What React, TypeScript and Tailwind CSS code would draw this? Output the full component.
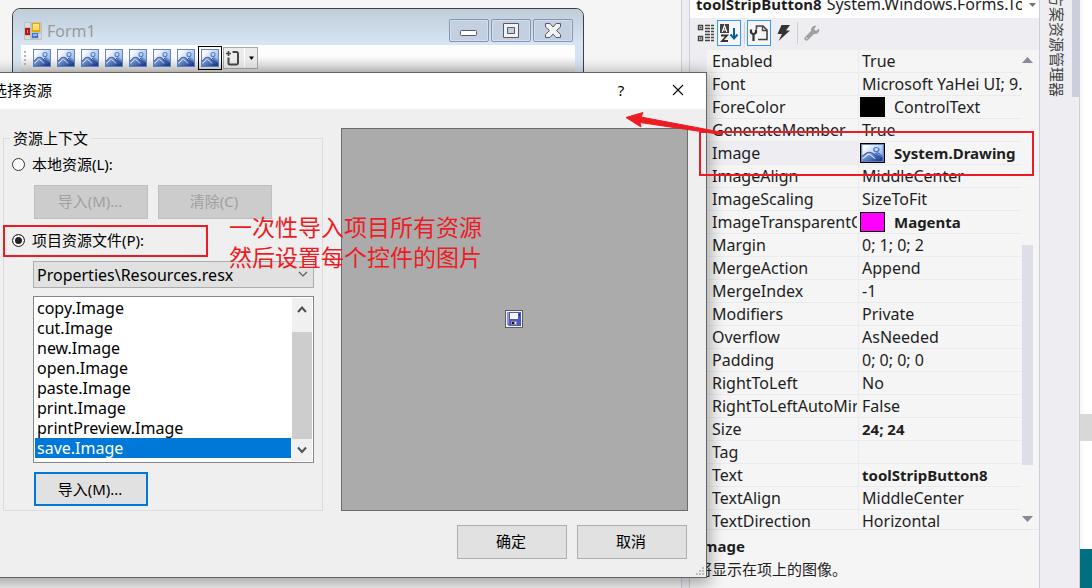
import React from 'react';

interface Property {
  name: string;
  value: string;
  bold?: boolean;
  swatch?: 'black' | 'magenta' | 'picture';
}

const PROPERTIES: Property[] = [
  { name: 'Enabled', value: 'True' },
  { name: 'Font', value: 'Microsoft YaHei UI; 9.' },
  { name: 'ForeColor', value: 'ControlText', swatch: 'black' },
  { name: 'GenerateMember', value: 'True' },
  { name: 'Image', value: 'System.Drawing', bold: true, swatch: 'picture' },
  { name: 'ImageAlign', value: 'MiddleCenter' },
  { name: 'ImageScaling', value: 'SizeToFit' },
  { name: 'ImageTransparentColor', value: 'Magenta', bold: true, swatch: 'magenta' },
  { name: 'Margin', value: '0; 1; 0; 2' },
  { name: 'MergeAction', value: 'Append' },
  { name: 'MergeIndex', value: '-1' },
  { name: 'Modifiers', value: 'Private' },
  { name: 'Overflow', value: 'AsNeeded' },
  { name: 'Padding', value: '0; 0; 0; 0' },
  { name: 'RightToLeft', value: 'No' },
  { name: 'RightToLeftAutoMirrorImage', value: 'False' },
  { name: 'Size', value: '24; 24', bold: true },
  { name: 'Tag', value: '' },
  { name: 'Text', value: 'toolStripButton8', bold: true },
  { name: 'TextAlign', value: 'MiddleCenter' },
  { name: 'TextDirection', value: 'Horizontal' },
];

const RESOURCES = [
  'copy.Image',
  'cut.Image',
  'new.Image',
  'open.Image',
  'paste.Image',
  'print.Image',
  'printPreview.Image',
  'save.Image',
];

const STRIP_BUTTONS = [1, 2, 3, 4, 5, 6, 7, 8];

/* Default tool strip image: mountains and a sun */
const PictureIcon: React.FC<{ className?: string }> = ({ className }) => (
  <svg className={className} viewBox="0 0 18 18" preserveAspectRatio="none">
    <defs>
      <linearGradient id="sky" x1="0" y1="0" x2="1" y2="0.8">
        <stop offset="0.15" stopColor="#ffffff" />
        <stop offset="1" stopColor="#86a6e6" />
      </linearGradient>
      <linearGradient id="hill" x1="0" y1="0" x2="1" y2="0.6">
        <stop offset="0" stopColor="#9cbcf2" />
        <stop offset="1" stopColor="#1f4694" />
      </linearGradient>
    </defs>
    <rect x="0.5" y="0.5" width="17" height="17" fill="url(#sky)" stroke="#6685c4" />
    <circle cx="12" cy="5.500" r="2" fill="#c9dafa" stroke="#4f7ccc" strokeWidth="1.100" />
    <path d="M1 13.500l5.500-5 3.500 3L12.500 9.500 17 13.500V17H1Z" fill="url(#hill)" />
    <path d="M1 12.500l3.500-3.500q2-1.500 4 0l6 6" fill="none" stroke="#3a5ea8" strokeWidth="1.100" />
    <path d="M10.500 10.500l1.500-1.500q1-.5 2 .5l3 3" fill="none" stroke="#3a5ea8" strokeWidth="1" />
    <path d="M1.500 14.500l4-4q1-.5 2 .5l3.500 3.500" fill="none" stroke="#dfeaff" strokeWidth="1" />
  </svg>
);

const FormIcon = () => (
  <svg className="size-[18px]" viewBox="0 0 18 18">
    <rect width="18" height="18" fill="#c2c2c4" />
    <path d="M1 1h5v4H1zM1 14h5v3H1zM15 12h2v5h-2z" fill="#dcdcde" />
    <rect x="1" y="6" width="5" height="7" fill="#b01c10" />
    <rect x="3" y="8" width="1" height="3" fill="#f08070" />
    <rect x="8" y="1" width="8" height="9" fill="#e8a400" />
    <rect x="9" y="2" width="6" height="6" fill="#ffe07a" />
    <rect x="8" y="11" width="6" height="5" fill="#3a78d8" />
    <rect x="9" y="12" width="4" height="2" fill="#8cbcf8" />
  </svg>
);

const SaveIcon = () => (
  <svg className="size-[18px]" viewBox="0 0 18 18">
    <rect x="0.5" y="0.5" width="17" height="17" fill="#f4f4f4" stroke="#5c5c5c" />
    <path d="M2 2h14v14H4l-2-2Z" fill="#5158c0" />
    <path d="M2 2h2v12H2z" fill="#8a92e4" />
    <rect x="5" y="3" width="8" height="6" fill="#f4f8ff" />
    <rect x="14" y="4" width="1" height="2" fill="#20246c" />
    <rect x="6" y="11" width="6" height="4" fill="#8c8c94" />
    <rect x="7" y="12" width="2" height="2" fill="#111" />
    <rect x="10" y="12" width="1" height="2" fill="#fff" />
  </svg>
);

const FormWindow = () => (
  <div className="h-[480px] rounded-t-lg border border-[#404040] bg-[#d6e4f2] shadow-[inset_0_1px_0_#eef4fa]">
    <div className="flex h-9 items-start rounded-t-lg bg-gradient-to-b from-[#bfcddb] to-[#d8e6f4] pl-[11px] pr-[10px] pt-[10px]">
      <div className="flex flex-1 items-center gap-[5px] pt-[2px]">
        <FormIcon />
        <span className="text-[16px] leading-5 text-[#9a9a9a]">Form1</span>
      </div>
      <div className="flex gap-[2px]">
        <button aria-label="Minimize" className="flex h-[23px] w-10 items-center justify-center rounded-[2px] border border-[#8494b4] bg-[#c4d0e0] shadow-[inset_0_0_0_1px_#d4dfec]">
          <svg className="h-[18px] w-[18px]" viewBox="0 0 18 18">
            <rect x="0.500" y="8.500" width="16" height="5" rx="1" fill="#fff" stroke="#54586a" />
          </svg>
        </button>
        <button aria-label="Maximize" className="flex h-[23px] w-10 items-center justify-center rounded-[2px] border border-[#8494b4] bg-[#c4d0e0] shadow-[inset_0_0_0_1px_#d4dfec]">
          <svg className="h-[18px] w-[18px]" viewBox="0 0 18 18">
            <path d="M1.500 1.500h15v14h-15zM5.500 5.500h7v6h-7z" fill="#f2f2f2" fillRule="evenodd" stroke="#54586a" />
          </svg>
        </button>
        <button aria-label="Close" className="flex h-[23px] w-10 items-center justify-center rounded-[2px] border border-[#8494b4] bg-[#c4d0e0] shadow-[inset_0_0_0_1px_#d4dfec]">
          <svg className="h-[18px] w-[18px]" viewBox="0 0 18 18">
            <path
              d="M1.500 1.500h4.500L9 5l3-3.500h4.500V5L12.500 8.500l4 4v3H12L9 12l-3 3.500H1.500v-3l4-4-4-3.500Z"
              fill="#f2f2f2"
              stroke="#54586a"
              strokeLinejoin="round"
            />
          </svg>
        </button>
      </div>
    </div>

    {/* Tool strip */}
    <div className="mx-2 flex h-7 items-center bg-gradient-to-b from-[#fdfdfd] from-40% to-[#d4d4d4] pl-[3px] pb-[2px]">
      <div className="flex w-[6px] flex-col gap-[2px]">
        <i className="size-[2px] bg-[#b8b8b8]" />
        <i className="size-[2px] bg-[#b8b8b8]" />
        <i className="size-[2px] bg-[#b8b8b8]" />
        <i className="size-[2px] bg-[#b8b8b8]" />
      </div>
      {STRIP_BUTTONS.map((n) => (
        <button
          key={n}
          aria-label={`toolStripButton${n}`}
          className={`flex size-6 items-center justify-center border ${n === 8 ? 'border-black' : 'border-transparent'}`}
        >
          <PictureIcon className="size-[18px]" />
        </button>
      ))}
      <button aria-label="Add item" className="ml-px flex h-[22px] w-[35px] items-center border border-[#a8a8a8] bg-[#ececec]">
        <svg className="h-5 w-[33px]" viewBox="0 0 33 20">
          <path d="M8.500 4h4a1.500 1.500 0 0 1 1.500 1.500v9.500a1.500 1.500 0 0 1-1.500 1.500H6A1.500 1.500 0 0 1 4.500 15V9.500" fill="none" stroke="#464646" strokeWidth="2" />
          <path d="M4.500 3v5M2 5.500h5" stroke="#464646" strokeWidth="1.600" />
          <rect x="20" y="0" width="1" height="20" fill="#fff" />
          <path d="M25 8.500h5L27.500 12Z" fill="#000" />
        </svg>
      </button>
    </div>
  </div>
);

const ResourceDialog = () => (
  <div
    role="dialog"
    aria-label="选择资源"
    className="absolute -left-[12px] right-[385px] top-[72px] border border-[#646464] bg-[#efefef] text-[15px] text-black shadow-[0_3px_14px_3px_rgba(0,0,0,0.32)]"
  >
    <div className="flex h-9 items-center bg-white pb-[2px] pl-[3px] pr-5">
      <h2 className="flex-1">选择资源</h2>
      <button aria-label="Help" className="w-4 text-center">?</button>
      <button aria-label="Close dialog" className="ml-[41px] flex size-4 items-center justify-center">
        <svg className="size-3" viewBox="0 0 12 12">
          <path d="M1 1l10 10M11 1L1 11" stroke="#000" strokeWidth="1.1" />
        </svg>
      </button>
    </div>

    <div className="flex items-stretch gap-[18px] pl-[14px] pr-[18px] pt-[19px]">
      <fieldset className="w-[320px] border border-[#dcdcdc] pb-1 pl-2 pr-2">
        <legend className="-ml-[2px] h-5 px-[3px] leading-5">资源上下文</legend>
        <div className="flex h-[34px] items-center gap-[7px] pb-[2px]">
          <input
            id="local"
            type="radio"
            name="context"
            className="size-[13px] appearance-none rounded-full border border-[#333] bg-white"
          />
          <label htmlFor="local">本地资源(L):</label>
        </div>
        <div className="ml-[22px] mt-[3px] flex gap-[10px]">
          <button disabled className="h-[34px] w-[114px] border border-[#bfbfbf] bg-[#cccccc] pb-px pr-[2px] text-[#a0a0a0]">导入(M)...</button>
          <button disabled className="h-[34px] w-[114px] border border-[#bfbfbf] bg-[#cccccc] pb-px pr-[2px] text-[#a0a0a0]">清除(C)</button>
        </div>
        <div className="flex h-[42px] items-center gap-[7px]">
          <input
            id="project"
            type="radio"
            name="context"
            defaultChecked
            className="size-[13px] appearance-none rounded-full border border-[#333] bg-[#222] shadow-[inset_0_0_0_2px_#fff]"
          />
          <label htmlFor="project">项目资源文件(P):</label>
        </div>
        <div className="relative ml-[21px]">
          <select
            aria-label="项目资源文件"
            className="block h-[27px] w-full appearance-none border border-[#adadad] bg-[#e1e1e1] pl-[3px] text-[16px]"
          >
            <option>Properties\Resources.resx</option>
          </select>
          <svg className="pointer-events-none absolute right-[6px] top-[10px] h-[6px] w-[10px]" viewBox="0 0 10 6">
            <path d="M1 1l4 4 4-4" fill="none" stroke="#5a5a5a" strokeWidth="1.2" />
          </svg>
        </div>
        <div className="ml-[21px] mt-2 flex h-[167px] border border-[#828790] bg-white p-px">
          <ul role="listbox" aria-label="资源" className="flex-1 text-[16px]">
            {RESOURCES.map((name) => (
              <li
                key={name}
                role="option"
                aria-selected={name === 'save.Image'}
                className={`h-5 pl-[2px] leading-5 ${name === 'save.Image' ? 'bg-[#0078d7] text-white' : ''}`}
              >
                {name}
              </li>
            ))}
          </ul>
          <div className="ml-px flex w-5 flex-col items-center bg-[#f0f0f0]">
            <svg className="h-[34px] w-[10px]" viewBox="0 0 10 34">
              <path d="M1 14l4-4.500 4 4.500" fill="none" stroke="#505050" strokeWidth="2" />
            </svg>
            <div className="w-full flex-1 bg-[#cdcdcd]" />
            <svg className="h-[22px] w-[10px]" viewBox="0 0 10 22">
              <path d="M1 8.500l4 4.500 4-4.500" fill="none" stroke="#505050" strokeWidth="2" />
            </svg>
          </div>
        </div>
        <button className="ml-[22px] mt-[9px] block h-[34px] w-[114px] border-2 border-[#0078d7] bg-[#e1e1e1] pr-[2px]">导入(M)...</button>
      </fieldset>

      <div className="flex flex-1 items-center justify-center border border-[#6c6c6c] bg-[#ababab] pb-[2px] pr-[2px]">
        <SaveIcon />
      </div>
    </div>

    <div className="flex justify-end gap-[10px] pb-[18px] pr-[19px] pt-[14px]">
      <button className="h-[34px] w-[110px] border border-[#adadad] bg-[#e1e1e1] pb-px pr-[2px]">确定</button>
      <button className="h-[34px] w-[110px] border border-[#adadad] bg-[#e1e1e1] pb-px pr-[2px]">取消</button>
    </div>

    {/* Size grip */}
    <svg className="absolute bottom-[1px] right-[1px] size-[10px]" viewBox="0 0 10 10">
      <path d="M7 1h2v2H7zM4 4h2v2H4zM7 4h2v2H7zM1 7h2v2H1zM4 7h2v2H4zM7 7h2v2H7z" fill="#bdbdbd" />
    </svg>
  </div>
);

const PropertyToolbar = () => (
  <div className="flex h-8 shrink-0 items-start bg-[#eeeef2] pl-[5px] pt-[2px]">
    <button aria-label="Categorized" className="flex h-[26px] w-[22px] items-center justify-center">
      <svg className="size-[18px]" viewBox="0 0 18 18">
        <path d="M1.500 1.500h4v4h-4zM1.500 12.500h4v4h-4z" fill="#fff" stroke="#424242" strokeWidth="1.400" />
        <path d="M2.500 3.500h2M3.500 2.500v2M2.500 14.500h2M3.500 13.500v2" stroke="#424242" strokeWidth="0.8" />
        <path d="M8 1.500h5M14 1.500h3M8 4.500h5M14 4.500h3M8 7.500h5M14 7.500h3M8 10.500h5M14 10.500h3M8 13.500h5M14 13.500h3M8 16.500h5M14 16.500h3" stroke="#424242" strokeWidth="1.400" />
      </svg>
    </button>
    <button aria-label="Alphabetical" className="flex h-[26px] w-6 items-center justify-center border border-[#3399ff] bg-[#f6f6f8]">
      <svg className="h-[22px] w-5" viewBox="0 0 20 22">
        <rect x="1" y="2" width="9" height="9" fill="#424242" />
        <path d="M3.200 10L5.500 3.500 7.800 10M4 8h3" fill="none" stroke="#fff" strokeWidth="1.200" />
        <path d="M2 13.500h6L3 19H9" fill="none" stroke="#333" strokeWidth="1.800" />
        <path d="M15 6v10M11.500 12.500l3.500 4 3.500-4" fill="none" stroke="#00639c" strokeWidth="2" />
      </svg>
    </button>
    <div className="ml-[3px] mr-[2px] mt-[2px] h-[22px] w-px bg-[#ccceDB]" />
    <button aria-label="Properties" className="flex h-[26px] w-6 items-center justify-center border border-[#3399ff] bg-[#f6f6f8]">
      <svg className="h-[22px] w-5" viewBox="0 0 20 22">
        <path d="M7.500 7V4H14l4 4v9.500H9" fill="#f5f5f5" stroke="#424242" strokeWidth="1.600" />
        <path d="M13.500 4v4.500H18" fill="none" stroke="#424242" strokeWidth="1.300" />
        <path d="M2 7.500v3l2.500 2 2.500-2v-3M4.500 12v7" fill="none" stroke="#333" strokeWidth="2.200" />
      </svg>
    </button>
    <button aria-label="Events" className="flex h-[26px] w-[26px] items-center justify-center">
      <svg className="size-[18px]" viewBox="0 0 18 18">
        <path d="M6.500 1H15l-4 5.500h4L3.500 17 7 10H2.500Z" fill="#333" />
      </svg>
    </button>
    <div className="mt-[2px] h-[22px] w-px bg-[#ccceDB]" />
    <button aria-label="Property pages" className="flex h-[26px] w-7 items-center justify-center">
      <svg className="size-4" viewBox="0 0 16 16">
        <path
          d="M15 3.500l-3 2.500-2-2L12.500 1C10 0 6.500 2 7 6L1 12a2 2 0 0 0 3 3l6-6c4 .5 6-2.500 5-5.500Z"
          fill="#a0a0a0"
        />
        <circle cx="2.800" cy="13.200" r="0.800" fill="#eeeef2" />
      </svg>
    </button>
  </div>
);

const Swatch: React.FC<{ kind: Property['swatch'] }> = ({ kind }) => {
  if (kind === 'picture') {
    return (
      <span className="flex h-5 w-[25px] shrink-0 border border-black">
        <PictureIcon className="size-full" />
      </span>
    );
  }
  return (
    <span className={`h-5 w-[25px] shrink-0 border border-black ${kind === 'magenta' ? 'bg-[#ff00ff]' : 'bg-black'}`} />
  );
};

const PropertyPanel = () => (
  <aside className="flex w-[351px] shrink-0 flex-col overflow-hidden border-x border-[#ccceDB] bg-[#f5f5f5] text-[15px] text-[#1e1e1e]">
    <div className="-mt-[10px] flex h-7 shrink-0 items-center gap-[5px] bg-white pl-[6px] pr-[3px]">
      <b>toolStripButton8</b>
      <span className="flex-1 overflow-hidden whitespace-nowrap text-[16px]">System.Windows.Forms.ToolStripButton</span>
      <svg className="ml-[2px] mt-[2px] h-1 w-[7px] shrink-0" viewBox="0 0 7 4">
        <path d="M0 0h7L3.500 4Z" fill="#717171" />
      </svg>
    </div>
    <PropertyToolbar />

    <div className="flex h-[480px] shrink-0 overflow-hidden border-b border-[#e6e6ec]">
      <div className="min-w-0 flex-1">
        <table className="w-full table-fixed border-separate border-spacing-0">
          <colgroup>
            <col className="w-[17px]" />
            <col className="w-[152px]" />
            <col />
          </colgroup>
          <tbody>
            {PROPERTIES.map((p) => (
              <tr key={p.name}>
                <td className="bg-[#eeeef2] p-0" />
                <th
                  scope="row"
                  className={`border-b border-r border-[#eaeaef] p-0 pl-[5px] pr-px text-left font-normal ${p.name === 'Image' ? 'bg-[#eeeef2]' : ''}`}
                >
                  <div className="h-[22px] overflow-hidden whitespace-nowrap text-[16px] leading-[22px]">{p.name}</div>
                </th>
                <td className="border-b border-[#eaeaef] p-0">
                  <div
                    className={`flex h-[22px] items-center gap-[9px] overflow-hidden whitespace-nowrap ${p.swatch ? 'pl-px' : 'pl-[3px]'} ${p.bold ? 'text-[15px] font-bold leading-5' : 'text-[16px] leading-[22px]'}`}
                  >
                    {p.swatch && <Swatch kind={p.swatch} />}
                    {p.value}
                  </div>
                </td>
              </tr>
            ))}
          </tbody>
        </table>
      </div>
      <div className="flex w-[17px] shrink-0 flex-col items-start py-[7px]">
        <svg className="h-[6px] w-[11px]" viewBox="0 0 11 6">
          <path d="M0 6h11L5.500 0Z" fill="#868999" />
        </svg>
        <div className="mt-[182px] h-[220px] w-[11px] bg-[#dedee8]" />
        <svg className="mt-auto h-[6px] w-[11px]" viewBox="0 0 11 6">
          <path d="M0 0h11L5.500 6Z" fill="#868999" />
        </svg>
      </div>
    </div>

    <div className="shrink-0 pl-[7px] pt-[5px]">
      <b className="block h-[23px] leading-[23px]">Image</b>
      <p className="leading-[23px]">将显示在项上的图像。</p>
    </div>
  </aside>
);

/* Marks drawn over the windows */
const Annotations = () => (
  <div className="pointer-events-none text-[#ed1c24]">
    <div className="absolute left-[3px] top-[225px] h-8 w-[205px] border-2 border-[#ed1c24]" />
    <p className="absolute left-[229px] top-[212px] whitespace-nowrap text-[23px] leading-[30px]">
      一次性导入项目所有资源
      <br />
      然后设置每个控件的图片
    </p>
    <div className="absolute right-[58px] top-[131px] h-[45px] w-[335px] border-2 border-[#ed1c24]" />
    <svg className="absolute right-[368px] top-[110px] h-[27px] w-[99px]" viewBox="0 0 99 27">
      <path d="M1 7.500l17-5-2 4.500 82 15.500-2 2L15 12.500l1 4.500Z" fill="#ed1c24" stroke="#ed1c24" strokeLinejoin="round" />
    </svg>
  </div>
);

export default function App() {
  return (
    <div className="relative flex h-screen overflow-hidden bg-[#eeeef2] font-['Noto_Sans','Noto_Sans_CJK_SC',sans-serif]">
      <main className="flex-1 border-r border-[#ccceDB] bg-[#f5f5f5] pl-3 pr-[97px] pt-2">
        <FormWindow />
      </main>
      <div className="w-[7px] shrink-0" />
      <PropertyPanel />

      {/* Collapsed tool window tab */}
      <div className="flex w-10 shrink-0 items-start justify-end gap-[5px] border-r border-[#ccceDB]">
        <button className="flex h-[97px] items-end overflow-hidden text-[15px] text-[#444] [text-orientation:sideways] [writing-mode:vertical-rl]">
          <span className="flex h-[97px] w-5 items-center justify-end whitespace-nowrap leading-5">解决方案资源管理器</span>
        </button>
        <div className="h-[97px] w-[7px] bg-[#ccceDB]" />
      </div>

      <div className="flex w-3 shrink-0 flex-col bg-gradient-to-r from-[#f7f7f9] to-white to-50%">
        <div className="mt-[414px] h-[27px] bg-[#d8d8d8]" />
        <div className="mt-auto h-[39px] bg-[#007080]" />
      </div>

      <ResourceDialog />
      <Annotations />
    </div>
  );
}
